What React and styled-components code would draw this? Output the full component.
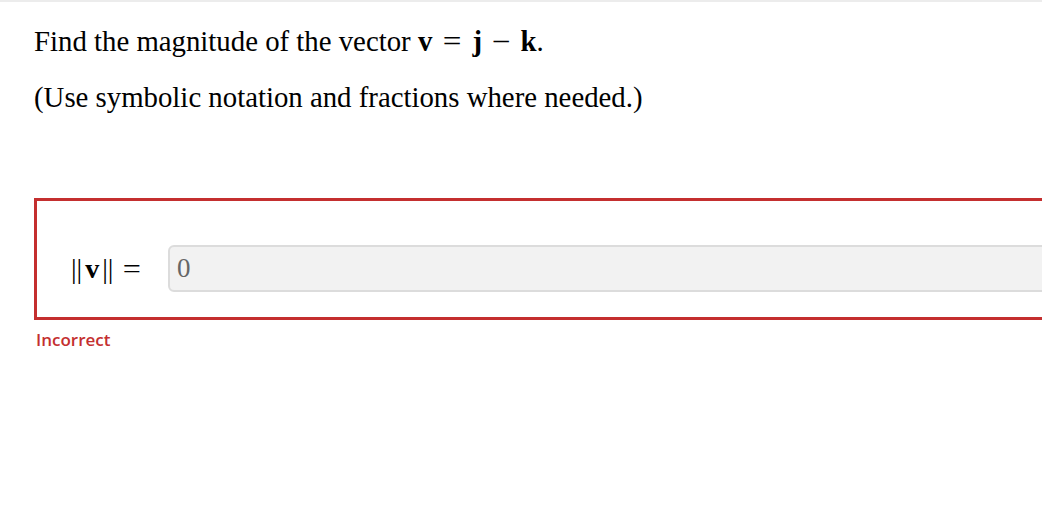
import React from "react";
import styled, { createGlobalStyle } from "styled-components";

const Global = createGlobalStyle`
  html, body { margin: 0; padding: 0; background: #fff; overflow: hidden; }
  body { width: 1042px; height: 532px; }
`;

const Page = styled.div`
  border-top: 2px solid #ececec;
  padding: 0 0 0 34px;
  font-family: "Liberation Serif", "Times New Roman", serif;
  color: #000;
`;

const Para = styled.p`
  margin: ${(p) => p.$mt}px 0 0 0;
  font-size: 28.8px;
  line-height: 30px;
  white-space: nowrap;
`;

const Bold = styled.b`
  font-weight: 700;
  margin: 0 ${(p) => p.$side || 0}px;
`;

const Op = styled.span`
  display: inline-block;
  margin: 0 ${(p) => p.$gap}px;
  transform: scaleX(1.15);
`;

const AnswerBox = styled.div`
  margin-top: 86px;
  width: 1100px;
  height: 97px;
  padding-top: 19px;
  border: 3px solid #c42f2f;
  box-sizing: content-box;
  display: flex;
  align-items: center;
  padding-left: 34px;
`;

const Label = styled.div`
  font-size: 28px;
  width: 97px;
  flex: none;
  white-space: nowrap;
  line-height: 30px;
`;

const Input = styled.div`
  flex: 1;
  height: 43px;
  border: 2px solid #dcdcdc;
  border-radius: 6px;
  background: #f2f2f2;
  display: flex;
  align-items: center;
  padding-left: 7px;
  font-size: 27px;
  color: #666;
`;

const Feedback = styled.div`
  margin-top: 8px;
  margin-left: 2px;
  font-family: "Open Sans", sans-serif;
  font-weight: 600;
  font-size: 17px;
  color: #c42f2f;
`;

export default function App() {
  return (
    <>
      <Global />
      <Page>
        <Para $mt={24}>
          Find the magnitude of the vector <Bold>v</Bold>
          <Op $gap={12}>=</Op>
          <Bold>j</Bold>
          <Op $gap={11}>−</Op>
          <Bold>k</Bold>.
        </Para>
        <Para $mt={26}>(Use symbolic notation and fractions where needed.)</Para>
        <AnswerBox>
          <Label>
            ||<Bold $side={3}>v</Bold>||<Op $gap={11}>=</Op>
          </Label>
          <Input>0</Input>
        </AnswerBox>
        <Feedback>Incorrect</Feedback>
      </Page>
    </>
  );
}
